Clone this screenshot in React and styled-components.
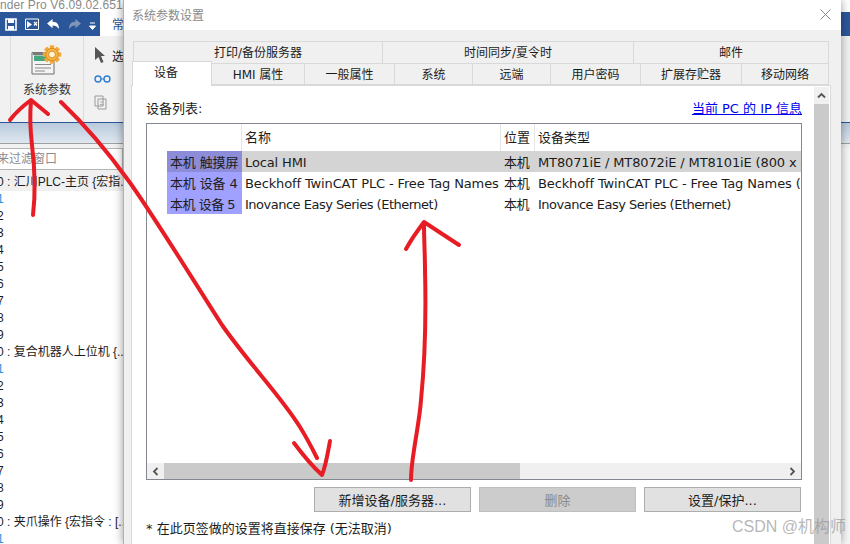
import React from 'react';
import styled, { createGlobalStyle } from 'styled-components';

const FONT = '"DejaVu Sans", "Noto Sans CJK SC", sans-serif';
const ARIAL = '"Liberation Sans", "Noto Sans CJK SC", sans-serif';

const GlobalStyle = createGlobalStyle`
    html, body {
        margin: 0;
        padding: 0;
        background: #ffffff;
    }
    * {
        box-sizing: border-box;
    }
`

const Page = styled.div`
    position: relative;
    display: flex;
    width: 850px;
    height: 544px;
    overflow: hidden;
    font-family: ${FONT};
    font-size: 12px;
    color: #1c1c1c;
`

/* the editor window behind the dialog */
const EditorLeft = styled.div`
    flex: 0 0 123px;
    display: flex;
    flex-direction: column;
    overflow: hidden;
    background: #ffffff;
`

const EditorRight = styled.div`
    flex: 1;
    display: flex;
    flex-direction: column;
    overflow: hidden;
`

const AppTitle = styled.div`
    flex: none;
    height: 12px;
    line-height: 10px;
    font-family: ${ARIAL};
    font-size: 12px;
    letter-spacing: 0.1px;
    white-space: nowrap;
    color: #8a8a8a;
    background: #ffffff;
`

const TitleRow = styled.div`
    flex: none;
    display: flex;
    height: 24px;
`

const QuickBar = styled.div`
    flex: 0 0 100px;
    display: flex;
    align-items: center;
    gap: 8px;
    padding-left: 5px;
    background: #2b579a;
`

const QuickIcon = styled.svg`
    flex: none;
    display: block;
`

const AppTab = styled.div`
    flex: 1;
    padding: 3px 0 0 12px;
    font-size: 12px;
    color: #2b579a;
    background: #ffffff;
`

const Ribbon = styled.div`
    flex: none;
    display: flex;
    height: 86px;
    background: #f1f1f1;
`

const RibbonGroup = styled.div`
    flex: 0 0 ${props => props.$width}px;
    display: flex;
    flex-direction: column;
    align-items: ${props => props.$center ? 'center' : 'flex-start'};
    padding: ${props => props.$center ? '9px 0 0' : '7px 0 0 10px'};
    border-right: ${props => props.$noLine ? 'none' : '1px solid #dcdcdc'};
`

const RibbonLabel = styled.div`
    margin-top: 5px;
    font-size: 12px;
    white-space: nowrap;
    color: #333333;
`

const SmallTool = styled.div`
    display: flex;
    align-items: center;
    gap: 6px;
    height: 24px;
    white-space: nowrap;
`

const PaneHeader = styled.div`
    flex: none;
    height: 22px;
    border-top: 1px solid #2b579a;
    border-bottom: 1px solid #a0a0a0;
    background: linear-gradient(#b9cadc, #dfe7f0);
`

const FilterGap = styled.div`
    flex: none;
    height: 4px;
    background: #f1f1f1;
`

const FilterInput = styled.div`
    flex: none;
    height: 22px;
    line-height: 20px;
    margin-left: -4px;
    border: 1px solid #b5b5b5;
    font-size: 12px;
    white-space: nowrap;
    color: #8c8c8c;
`

const MacroList = styled.div`
    flex: 1;
    min-height: 0;
    overflow: hidden;
`

const MacroRow = styled.div`
    height: ${props => props.$head ? 21 : 17}px;
    line-height: 17px;
    margin-left: -3px;
    padding-top: ${props => props.$head ? 4 : 0}px;
    font-family: ${ARIAL};
    font-size: 12px;
    white-space: nowrap;
    overflow: hidden;
    background: ${props => props.$head ? '#f0f0f0' : 'transparent'};
    color: ${props => props.$mark ? '#2f8fe0' : '#1c1c1c'};
`

const Dialog = styled.div`
    position: relative;
    z-index: 1;
    flex: 0 0 718px;
    display: flex;
    flex-direction: column;
    border-left: 1px solid #b0b0b0;
    background: #f0f0f0;
    box-shadow: 0 0 9px rgba(0, 0, 0, 0.4);
`

const DialogTitle = styled.div`
    flex: none;
    display: flex;
    justify-content: space-between;
    align-items: center;
    height: 30px;
    padding: 0 10px 2px 8px;
    color: #8a8a8a;
    background: #ffffff;
`

const TabRow = styled.div`
    flex: none;
    display: flex;
    height: ${props => props.$height}px;
    margin-left: ${props => props.$left}px;
`

const Tab = styled.div`
    flex: 0 0 ${props => props.$width}px;
    display: flex;
    justify-content: center;
    align-items: center;
    padding-bottom: 2px;
    border: 1px solid #d9d9d9;
    border-left-width: ${props => props.$first ? '1px' : '0'};
    border-bottom-width: ${props => props.$back ? '0' : '1px'};
    white-space: nowrap;
    background: #f0f0f0;
`

const ActiveTab = styled(Tab)`
    position: relative;
    height: 25px;
    margin-top: -2px;
    padding: 0 12px 5px 0;
    border: 1px solid #d9d9d9;
    border-bottom: none;
    background: #ffffff;
    z-index: 1;
`

const Panel = styled.div`
    flex: 1;
    display: flex;
    width: 700px;
    margin-left: 7px;
    border: 1px solid #d9d9d9;
    border-bottom: none;
    font-size: 13px;
    background: #ffffff;
    min-height: 0;
`

const PanelBody = styled.div`
    flex: 1;
    display: flex;
    flex-direction: column;
    padding: 13px 12px 0 14px;
    min-width: 0;
`

const ListHeading = styled.div`
    display: flex;
    justify-content: space-between;
    align-items: center;
    height: 17px;
    margin-bottom: 7px;
`

const Link = styled.a`
    color: #0000ee;
    text-decoration: underline;
    white-space: nowrap;
`

const ListBox = styled.div`
    flex: none;
    display: flex;
    flex-direction: column;
    height: 357px;
    border: 1px solid #828790;
`

const HeaderRow = styled.div`
    flex: none;
    display: grid;
    grid-template-columns: 95px 259px 34px 1fr;
    height: 27px;
`

const HeaderCell = styled.div`
    padding: 3px 0 0 3px;
    border-right: ${props => props.$last ? 'none' : '1px solid #e5e5e5'};
    white-space: nowrap;
    overflow: hidden;
`

const Rows = styled.div`
    flex: 1;
    overflow: hidden;
`

const Row = styled.div`
    display: grid;
    grid-template-columns: 20px 75px 259px 34px 1fr;
    height: 21px;
    line-height: 19px;
    letter-spacing: ${props => props.$spacing}px;
`

const RowGutter = styled.div`
    background: #ffffff;
`

const RowTag = styled.div`
    padding: 2px 0 0 3px;
    white-space: nowrap;
    overflow: hidden;
    background: ${props => props.$selected ? '#8c8cd8' : '#a0a0ff'};
`

const RowCell = styled.div`
    padding: 2px 0 0 3px;
    white-space: nowrap;
    overflow: hidden;
    background: ${props => props.$selected ? '#d4d4d4' : '#ffffff'};
`

const HScroll = styled.div`
    flex: none;
    display: flex;
    align-items: stretch;
    height: 16px;
    background: #f0f0f0;
`

const ScrollArrow = styled.div`
    flex: 0 0 17px;
    display: flex;
    justify-content: center;
    align-items: center;
`

const HThumb = styled.div`
    flex: 0 0 356px;
    background: #cacaca;
`

const HTrack = styled.div`
    flex: 1;
`

const ButtonRow = styled.div`
    flex: none;
    display: flex;
    justify-content: flex-end;
    gap: 8px;
    margin: 7px 1px 0 0;
`

const Button = styled.button`
    width: 157px;
    height: 25px;
    padding: 0;
    border: 1px solid ${props => props.disabled ? '#bfbfbf' : '#adadad'};
    font-family: inherit;
    font-size: 13px;
    color: ${props => props.disabled ? '#8a8a8a' : '#1c1c1c'};
    background: ${props => props.disabled ? '#cccccc' : '#e1e1e1'};
`

const Footnote = styled.div`
    margin-top: 6px;
    white-space: nowrap;
`

const VScroll = styled.div`
    flex: 0 0 15px;
    display: flex;
    flex-direction: column;
    margin: 1px 1px 0 0;
`

const VArrow = styled.div`
    flex: 0 0 17px;
    display: flex;
    justify-content: center;
    align-items: center;
    background: #f0f0f0;
`

const VThumb = styled.div`
    flex: 1;
    background: #cacaca;
`

const StripBlock = styled.div`
    flex: none;
    height: ${props => props.$height}px;
    background: ${props => props.$color};
`

const Watermark = styled.div`
    position: absolute;
    z-index: 3;
    right: 4px;
    bottom: 7px;
    font-family: ${ARIAL};
    font-size: 16px;
    white-space: nowrap;
    color: rgba(150, 150, 150, 0.7);
`

const Scribbles = styled.svg`
    position: absolute;
    z-index: 2;
    top: 0;
    left: 0;
    pointer-events: none;
`

const backTabs = [
    ['打印/备份服务器', 250],
    ['时间同步/夏令时', 251],
    ['邮件', 195],
];

const frontTabs = [
    ['HMI 属性', 93],
    ['一般属性', 90],
    ['系统', 78],
    ['远端', 78],
    ['用户密码', 90],
    ['扩展存贮器', 101],
    ['移动网络', 87],
];

const devices = [
    { tag: '本机 触摸屏', name: 'Local HMI', type: 'MT8071iE / MT8072iE / MT8101iE (800 x 480)', spacing: -0.13, selected: true },
    { tag: '本机 设备 4', name: 'Beckhoff TwinCAT PLC - Free Tag Names', type: 'Beckhoff TwinCAT PLC - Free Tag Names (Ethernet)', spacing: -0.13 },
    { tag: '本机 设备 5', name: 'Inovance Easy Series (Ethernet)', type: 'Inovance Easy Series (Ethernet)', spacing: -0.5 },
];

const macros = [
    '0 : 汇川PLC-主页 {宏指..', '1', '2', '3', '4', '5', '6', '7', '8', '9',
    '0 : 复合机器人上位机 {..', '1', '2', '3', '4', '5', '6', '7', '8', '9',
    '0 : 夹爪操作 {宏指令 : [..', '1',
];

function Chevron({ rotate }) {
    return (
        <svg width="9" height="9" viewBox="0 0 9 9" style={{ transform: `rotate(${rotate}deg)` }}>
            <path d="M1 6.5 L4.5 3 L8 6.5" fill="none" stroke="#555" strokeWidth="1.8" />
        </svg>
    );
}

function QuickIcons() {
    return (
        <>
            <QuickIcon width="12" height="13" viewBox="0 0 12 13">
                <path d="M1 1 H11 V12 H1 Z" fill="none" stroke="#fff" strokeWidth="1.6" />
                <path d="M3 1 H9 V5 H3 Z M3 8 H9 V12 H3 Z" fill="#fff" />
            </QuickIcon>
            <QuickIcon width="14" height="12" viewBox="0 0 14 12">
                <path d="M0.5 1 H13.5 V11.5 H0.5 Z" fill="none" stroke="#fff" />
                <path d="M2 3 L7 6.5 L2 10 Z" fill="#fff" />
                <path d="M9 4 L12 7.5 M12 4 L9 7.5" stroke="#fff" strokeWidth="1.2" />
            </QuickIcon>
            <QuickIcon width="13" height="11" viewBox="0 0 14 12">
                <path d="M0 5 L6 0 V3 C11 3 13 6 13 11 C11 8 9 7 6 7 V10 Z" fill="#fff" />
            </QuickIcon>
            <QuickIcon width="13" height="11" viewBox="0 0 14 12">
                <path d="M14 5 L8 0 V3 C3 3 1 6 1 11 C3 8 5 7 8 7 V10 Z" fill="#7f95b8" />
            </QuickIcon>
            <QuickIcon width="7" height="14" viewBox="0 0 7 14">
                <path d="M1 6 H6 M0.5 9 H6.5 L3.5 12.5 Z" stroke="#fff" fill="#fff" strokeWidth="1" />
            </QuickIcon>
        </>
    );
}

function SystemIcon() {
    const teeth = [0, 45, 90, 135, 180, 225, 270, 315];
    return (
        <svg width="32" height="30" viewBox="0 0 32 30">
            <path d="M1 7.5 H23 V29 H1 Z" fill="#f4f4f4" stroke="#6f6f6f" />
            <path d="M2 7 H22 V10 H2 Z" fill="#7a7a7a" />
            <path d="M3 10.5 H21 V16 H3 Z" fill="#46a67f" />
            <path d="M4 19.5 H20 M4 23 H20 M4 26 H14" stroke="#8a8a8a" />
            <g transform="translate(21 9.5)">
                {teeth.map(deg => (
                    <rect key={deg} x="-2.2" y="-9.2" width="4.4" height="4" fill="#f3a93a" transform={`rotate(${deg})`} />
                ))}
                <circle r="6.2" fill="#f8b640" stroke="#d98e24" />
                <circle r="3.4" fill="#fff4d8" stroke="#d98e24" />
            </g>
        </svg>
    );
}

function SideTools() {
    return (
        <>
            <SmallTool>
                <svg width="12" height="16" viewBox="0 0 12 16">
                    <path d="M1 0 L11 9 H7 L9.5 15 L7 16 L4.5 10 L1 13 Z" fill="#555" />
                </svg>
                选
            </SmallTool>
            <SmallTool>
                <svg width="17" height="10" viewBox="0 0 17 10">
                    <circle cx="4" cy="5" r="3" fill="none" stroke="#2f7fd0" strokeWidth="1.4" />
                    <circle cx="13" cy="5" r="3" fill="none" stroke="#2f7fd0" strokeWidth="1.4" />
                    <path d="M7 5 H10" stroke="#2f7fd0" />
                </svg>
            </SmallTool>
            <SmallTool>
                <svg width="16" height="16" viewBox="0 0 16 16">
                    <path d="M1 1 H9 V11 H1 Z M4 4 H12 V14 H4 Z" fill="#f1f1f1" stroke="#9a9a9a" />
                    <path d="M6 7 H10 M6 9.5 H10" stroke="#b0b0b0" />
                </svg>
            </SmallTool>
        </>
    );
}

function RedArrows() {
    return (
        <Scribbles width="850" height="544" viewBox="0 0 850 544" fill="none" stroke="#e81c24" strokeWidth="4" strokeLinecap="round" strokeLinejoin="round">
            <path d="M33 215 C36 190 35 170 32 145 C30 128 30 112 31 101" />
            <path d="M10 120 C16 112 23 106 31 100 L48 114" />
            <path d="M61 102 C85 125 110 155 128 180 C150 210 190 275 222 325 C250 365 280 395 300 427 C308 440 313 450 317 458" />
            <path d="M294 443 C303 455 312 466 322 475 C326 465 328 452 330 441" />
            <path d="M411 480 C411 470 412 463 414 450 C417 430 420 415 421 400 C425 360 426 310 425 270 C425 255 424 240 424 224" />
            <path d="M406 249 C412 238 418 230 424 222 L459 245" />
        </Scribbles>
    );
}

function App() {
    return (
        <Page>
            <GlobalStyle />

            <EditorLeft>
                <AppTitle>nder Pro V6.09.02.651</AppTitle>
                <TitleRow>
                    <QuickBar><QuickIcons /></QuickBar>
                    <AppTab>常</AppTab>
                </TitleRow>
                <Ribbon>
                    <RibbonGroup $width={10} />
                    <RibbonGroup $width={73} $center>
                        <SystemIcon />
                        <RibbonLabel>系统参数</RibbonLabel>
                    </RibbonGroup>
                    <RibbonGroup $width={40} $noLine>
                        <SideTools />
                    </RibbonGroup>
                </Ribbon>
                <PaneHeader />
                <FilterGap />
                <FilterInput>来过滤窗口</FilterInput>
                <MacroList>
                    {macros.map((text, i) => (
                        <MacroRow key={i} $head={i === 0} $mark={text === '1'}>{text}</MacroRow>
                    ))}
                </MacroList>
            </EditorLeft>

            <Dialog>
                <DialogTitle>
                    系统参数设置
                    <svg width="11" height="11" viewBox="0 0 11 11">
                        <path d="M0.5 0.5 L10.5 10.5 M10.5 0.5 L0.5 10.5" stroke="#8a8a8a" />
                    </svg>
                </DialogTitle>

                <StripBlock $height={11} $color="#f0f0f0" />
                <TabRow $height={22} $left={9}>
                    {backTabs.map(([label, width], i) => (
                        <Tab key={label} $width={width} $first={i === 0} $back>{label}</Tab>
                    ))}
                </TabRow>
                <TabRow $height={22} $left={8}>
                    <ActiveTab $width={80}>设备</ActiveTab>
                    {frontTabs.map(([label, width]) => (
                        <Tab key={label} $width={width}>{label}</Tab>
                    ))}
                </TabRow>

                <Panel>
                    <PanelBody>
                        <ListHeading>
                            <span>设备列表:</span>
                            <Link>当前 PC 的 IP 信息</Link>
                        </ListHeading>

                        <ListBox>
                            <HeaderRow>
                                <HeaderCell />
                                <HeaderCell>名称</HeaderCell>
                                <HeaderCell>位置</HeaderCell>
                                <HeaderCell $last>设备类型</HeaderCell>
                            </HeaderRow>
                            <Rows>
                                {devices.map(device => (
                                    <Row key={device.tag} $spacing={device.spacing}>
                                        <RowGutter />
                                        <RowTag $selected={device.selected}>{device.tag}</RowTag>
                                        <RowCell $selected={device.selected}>{device.name}</RowCell>
                                        <RowCell $selected={device.selected}>本机</RowCell>
                                        <RowCell $selected={device.selected}>{device.type}</RowCell>
                                    </Row>
                                ))}
                            </Rows>
                            <HScroll>
                                <ScrollArrow><Chevron rotate={-90} /></ScrollArrow>
                                <HThumb />
                                <HTrack />
                                <ScrollArrow><Chevron rotate={90} /></ScrollArrow>
                            </HScroll>
                        </ListBox>

                        <ButtonRow>
                            <Button>新增设备/服务器...</Button>
                            <Button disabled>删除</Button>
                            <Button>设置/保护...</Button>
                        </ButtonRow>

                        <Footnote>* 在此页签做的设置将直接保存 (无法取消)</Footnote>
                    </PanelBody>

                    <VScroll>
                        <VArrow><Chevron rotate={0} /></VArrow>
                        <VThumb />
                    </VScroll>
                </Panel>
            </Dialog>

            <EditorRight>
                <StripBlock $height={12} $color="#ffffff" />
                <StripBlock $height={24} $color="#2b579a" />
                <StripBlock $height={86} $color="#f1f1f1" />
                <PaneHeader />
                <FilterGap />
                <StripBlock $height={396} $color="#f7f7f7" />
            </EditorRight>

            <RedArrows />
            <Watermark>CSDN @机构师</Watermark>
        </Page>
    );
}

export default App;
